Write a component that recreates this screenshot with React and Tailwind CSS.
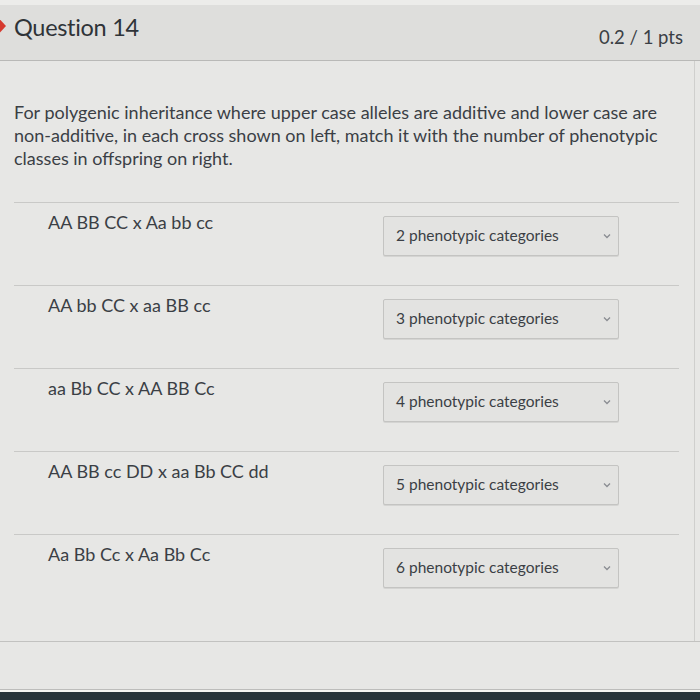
const rows = [
  { cross: 'AA BB CC x Aa bb cc', answer: '2 phenotypic categories' },
  { cross: 'AA bb CC x aa BB cc', answer: '3 phenotypic categories' },
  { cross: 'aa Bb CC x AA BB Cc', answer: '4 phenotypic categories' },
  { cross: 'AA BB cc DD x aa Bb CC dd', answer: '5 phenotypic categories' },
  { cross: 'Aa Bb Cc x Aa Bb Cc', answer: '6 phenotypic categories' },
]

function Chevron() {
  return (
    <svg width="10" height="10" viewBox="0 0 10 10" className="text-[#8a8d92]">
      <path d="M2 3.5 L5 6.5 L8 3.5" fill="none" stroke="currentColor" strokeWidth="1.3" />
    </svg>
  )
}

export default function App() {
  return (
    <div
      className="h-[700px] w-[700px] overflow-hidden bg-[#e7e7e5] text-[#3b3f45]"
      style={{ fontFamily: 'Lato, "Open Sans", sans-serif' }}
    >
      {/* question header */}
      <div className="relative flex h-[61px] items-start justify-between border-t-[5px] border-b border-t-[#ececea] border-b-[#b9b9b7] bg-[#dededc] pl-[14px] pr-[17px]">
        <div className="absolute left-[-6px] top-[8px] h-[26px] w-[12px] bg-[#d63a2f] [clip-path:polygon(0_0,100%_50%,0_100%)]" />
        <h2 className="pt-[5px] text-[23.5px] font-normal tracking-[-0.3px] text-[#2f3338]">Question 14</h2>
        <span className="pt-[19px] text-[18.5px] text-[#3b3f45]">0.2 / 1 pts</span>
      </div>

      <div className="mr-[5px] border-r border-[#cfcfcd]">
        <p className="pl-[14px] pr-[30px] pt-[40px] pb-[32px] text-[18px] leading-[23px]">
          For polygenic inheritance where upper case alleles are additive and lower case are
          non-additive, in each cross shown on left, match it with the number of phenotypic
          classes in offspring on right.
        </p>

        <div className="ml-[14px] mr-[15px] border-t border-[#c9c9c7]">
          {rows.map((r, i) => (
            <div
              key={i}
              className="flex h-[83px] items-start justify-between border-b border-[#c9c9c7] pt-[8px] pl-[34px] pr-[60px] last:h-[106px] last:border-b-0"
            >
              <span className="text-[18px] leading-[22px]">{r.cross}</span>
              <div className="mt-[5px] flex h-[40px] w-[236px] items-center justify-between rounded-[2px] border border-[#c4c4c2] bg-[#e3e3e1] pl-[12px] pr-[6px] text-[15.5px] shadow-[0_1px_0_#d4d4d2]">
                <span>{r.answer}</span>
                <Chevron />
              </div>
            </div>
          ))}
        </div>
      </div>
      <div className="h-[48px] border-t border-[#c2c2c0]" />
      <div className="h-[3px] border-t border-[#bdbdbb] bg-[#f4f4f2]" />
      <div className="h-[20px] bg-[#27343a]" />
    </div>
  )
}
